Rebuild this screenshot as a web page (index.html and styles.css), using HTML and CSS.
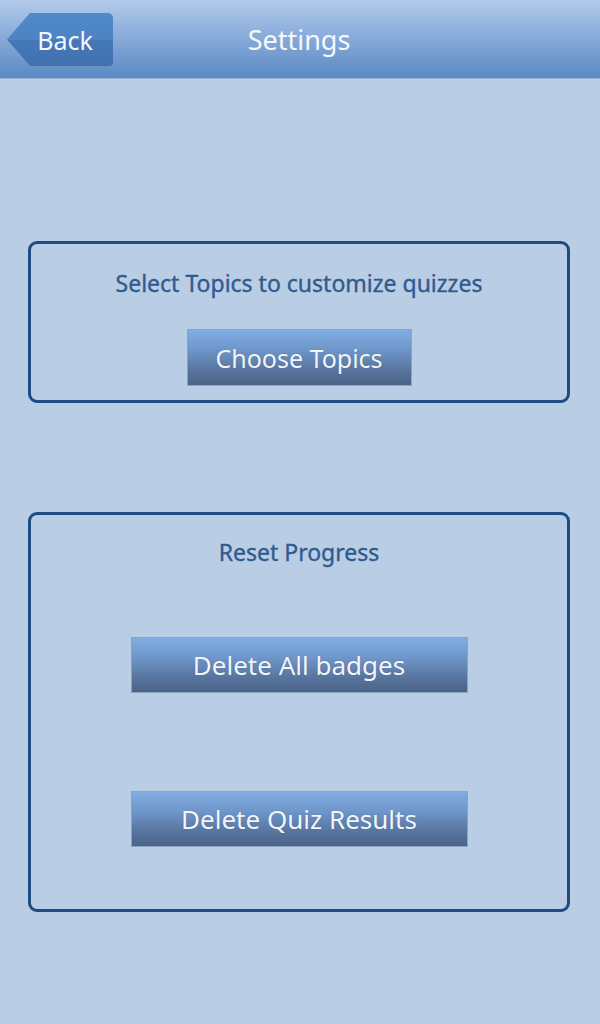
FILE: index.html
```html
<!DOCTYPE html>
<html>
<head>
<meta charset="utf-8">
<link rel="stylesheet" href="styles.css">
</head>
<body>
<header class="topbar">
  <div class="back-wrap"><div class="back">Back</div></div>
  <div class="title">Settings</div>
  <div></div>
</header>
<main class="content">
  <section class="panel panel-topics">
    <div class="panel-label">Select Topics to customize quizzes</div>
    <div class="btn btn-topics">Choose Topics</div>
  </section>
  <section class="panel panel-reset">
    <div class="panel-label">Reset Progress</div>
    <div class="btn btn-wide btn-badges">Delete All badges</div>
    <div class="btn btn-wide btn-results">Delete Quiz Results</div>
  </section>
</main>
</body>
</html>
```

FILE: styles.css
```css
html, body {
  margin: 0;
  padding: 0;
}
body {
  width: 600px;
  height: 1024px;
  background: #b9cde5;
  font-family: "Noto Sans", "Open Sans", "DejaVu Sans", sans-serif;
  overflow: hidden;
}
.topbar {
  height: 78px;
  display: grid;
  grid-template-columns: 1fr auto 1fr;
  align-items: center;
  background: linear-gradient(to bottom, #b3cbec 0%, #8eb0dc 40%, #5b89c3 100%);
  border-bottom: 1px solid #9ab3d3;
}
.back-wrap {
  padding-left: 7px;
  display: flex;
  align-items: center;
}
.back {
  width: 106px;
  height: 53px;
  box-sizing: border-box;
  padding-left: 10px;
  display: flex;
  align-items: center;
  justify-content: center;
  color: #f4f8fd;
  font-size: 25px;
  background: linear-gradient(to bottom, #5189c9 0%, #4d83c3 50%, #4577b6 52%, #4272b0 100%);
  clip-path: polygon(0 50%, 23px 0, 100% 0, 100% 100%, 23px 100%);
  border-radius: 0 5px 4px 0;
  margin-top: 1px;
}
.title {
  color: #f4f8fd;
  font-size: 27px;
  text-align: center;
  padding-right: 2px;
}
.content {
  padding: 162px 30px 0 28px;
  display: flex;
  flex-direction: column;
}
.panel {
  border: 3px solid #1f4b83;
  border-radius: 9px;
  display: flex;
  flex-direction: column;
  align-items: center;
}
.panel-topics {
  height: 162px;
  box-sizing: border-box;
  padding-top: 26px;
}
.panel-reset {
  margin-top: 109px;
  height: 400px;
  box-sizing: border-box;
  padding-top: 24px;
}
.panel-label {
  color: #2f5b8f;
  font-size: 23px;
  line-height: 26px;
  -webkit-text-stroke: 0.35px #2f5b8f;
}
.btn {
  box-sizing: border-box;
  display: flex;
  align-items: center;
  justify-content: center;
  color: #f2f6fb;
  font-size: 26px;
  background: linear-gradient(to bottom, #81ace3 0%, #6f97cb 35%, #56739c 75%, #4b6388 100%);
  border: 1px solid #8da3bf;
  text-shadow: 0 0 1px rgba(40, 60, 90, 0.4);
}
.btn-topics {
  width: 225px;
  height: 57px;
  margin-top: 33px;
  font-size: 25px;
}
.btn-wide {
  width: 337px;
  height: 56px;
}
.btn-badges {
  margin-top: 72px;
}
.btn-results {
  margin-top: 98px;
}
```
